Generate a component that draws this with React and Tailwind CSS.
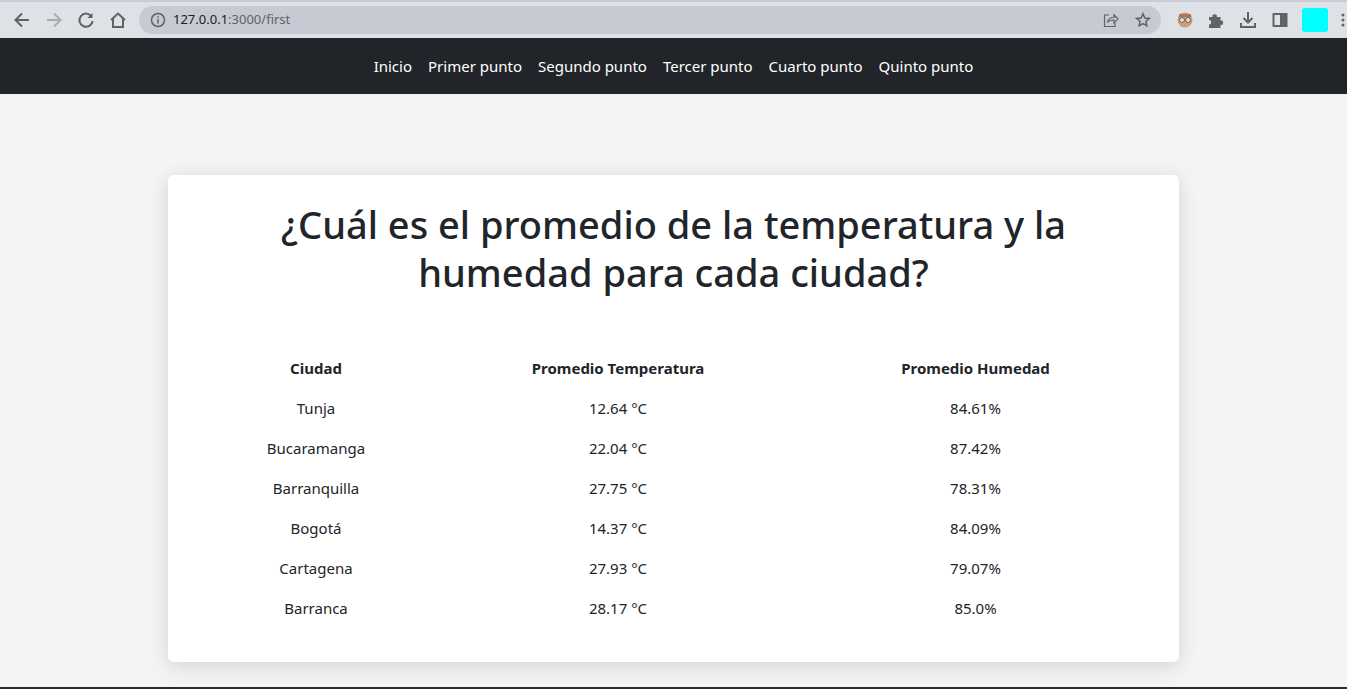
const rows = [
  ['Tunja', '12.64 °C', '84.61%'],
  ['Bucaramanga', '22.04 °C', '87.42%'],
  ['Barranquilla', '27.75 °C', '78.31%'],
  ['Bogotá', '14.37 °C', '84.09%'],
  ['Cartagena', '27.93 °C', '79.07%'],
  ['Barranca', '28.17 °C', '85.0%'],
];

const links = ['Inicio', 'Primer punto', 'Segundo punto', 'Tercer punto', 'Cuarto punto', 'Quinto punto'];

const ChromeBar = () => (
  <div className="h-[38px] bg-[#dee1e6] border-t-2 border-[#c9cbdb] flex items-center text-[#5f6368]">
    <div className="flex items-center w-[139px] pl-[12px] gap-[12px] shrink-0">
      <svg width="20" height="20" viewBox="0 0 20 20" fill="none" stroke="currentColor" strokeWidth="2"><path d="M17 10H4M10 3.5 3.5 10l6.5 6.5" /></svg>
      <svg width="20" height="20" viewBox="0 0 20 20" fill="none" stroke="#a9abb0" strokeWidth="2"><path d="M3 10h13M10 3.5l6.500 6.500-6.500 6.500" /></svg>
      <svg width="20" height="20" viewBox="0 0 20 20" fill="none" stroke="currentColor" strokeWidth="2"><path d="M15.500 6.500A6.600 6.600 0 1 0 16.600 11" /><path d="M16.500 3v5h-5" fill="currentColor" stroke="none" /></svg>
      <svg width="20" height="20" viewBox="0 0 20 20" fill="none" stroke="currentColor" strokeWidth="2"><path d="M3 10l7-6.500 7 6.500M5 8.500V17h10V8.500" /></svg>
    </div>
    <div className="h-[28px] w-[1022px] shrink-0 rounded-full bg-[#c8cad3] flex items-center pl-[11px] pr-[10px]">
      <svg width="16" height="16" viewBox="0 0 16 16" fill="none" stroke="currentColor" strokeWidth="1.500"><circle cx="8" cy="8" r="6.500" /><path d="M8 7v4.500M8 4.200v1.500" /></svg>
      <span className="ml-[7px] text-[13px] text-[#202124] font-['Noto_Sans',sans-serif]">127.0.0.1<span className="text-[#5f6368]">:3000/first</span></span>
      <div className="ml-auto flex items-center gap-[16px]">
        <svg width="16" height="16" viewBox="0 0 16 16" fill="none" stroke="currentColor" strokeWidth="1.200"><path d="M6 3H1.500v11.500H12V11" /><path d="M4.500 10.500c.5-3.500 3-5 6.500-5V2.800l4 4-4 4V8c-2.500 0-5 .5-6.500 2.500z" /></svg>
        <svg width="16" height="16" viewBox="0 0 16 16" fill="none" stroke="currentColor" strokeWidth="1.500"><path d="M8 1.800l1.800 4.200 4.500.4-3.400 3 1 4.400L8 11.500l-3.900 2.300 1-4.400-3.400-3 4.500-.4z" /></svg>
      </div>
    </div>
    <div className="flex items-center pl-[15px] gap-[12px]">
      <svg width="18" height="18" viewBox="0 0 18 18"><circle cx="9" cy="9" r="7.500" fill="#d99a72" /><rect x="3" y="3" width="12" height="3" fill="#b5764f" /><circle cx="6" cy="9" r="2.500" fill="#cfe8ee" stroke="#5f6368" /><circle cx="12" cy="9" r="2.500" fill="#cfe8ee" stroke="#5f6368" /></svg>
      <svg width="20" height="20" viewBox="0 0 20 20" fill="currentColor"><path d="M3 7h3.500a2.200 2.200 0 1 1 4.300 0H14.500v3.500a2.200 2.200 0 1 1 0 4.300V18H3v-3.500a2.200 2.200 0 1 0 0-4.500z" /></svg>
      <svg width="20" height="20" viewBox="0 0 20 20" fill="none" stroke="currentColor" strokeWidth="2"><path d="M10 2v10M5.500 8l4.500 4.500L14.500 8M3 13v4h14v-4" /></svg>
      <svg width="20" height="20" viewBox="0 0 20 20" fill="none" stroke="currentColor" strokeWidth="2"><rect x="3.500" y="4" width="13" height="12" /><rect x="11" y="4" width="5" height="12" fill="currentColor" /></svg>
      <div className="w-[26px] h-[24px] rounded-[3px] bg-[#00ffff]" />
      <svg width="4" height="16" viewBox="0 0 4 16" fill="currentColor" className="ml-[1px]"><circle cx="2" cy="3" r="1.500" /><circle cx="2" cy="8" r="1.500" /><circle cx="2" cy="13" r="1.500" /></svg>
    </div>
  </div>
);

export default function App() {
  return (
    <div className="h-[689px] overflow-hidden bg-[#f4f4f4] flex flex-col font-['Noto_Sans',sans-serif] text-[#212529]">
      <ChromeBar />
      <nav className="h-[56px] bg-[#212529] flex items-center justify-center gap-[16px] text-white text-[15px]">
        {links.map(link => <a key={link}>{link}</a>)}
      </nav>
      <div className="flex-1 flex justify-center pt-[81px]">
        <div className="w-[1011px] h-[487px] bg-white rounded-[6px] shadow-[0_4px_20px_rgba(0,0,0,0.14)] px-[32px] pt-[25px]">
          <h1 className="text-[38px] leading-[48px] font-medium text-center px-[60px]">¿Cuál es el promedio de la temperatura y la humedad para cada ciudad?</h1>
          <table className="w-full mt-[52px] text-center text-[15px] table-fixed">
            <colgroup>
              <col className="w-[232px]" />
              <col className="w-[372px]" />
              <col />
            </colgroup>
            <thead>
              <tr className="h-[40px]">
                <th className="font-bold">Ciudad</th>
                <th className="font-bold">Promedio Temperatura</th>
                <th className="font-bold">Promedio Humedad</th>
              </tr>
            </thead>
            <tbody>
              {rows.map(row => (
                <tr key={row[0]} className="h-[40px]">
                  {row.map(cell => <td key={cell}>{cell}</td>)}
                </tr>
              ))}
            </tbody>
          </table>
        </div>
      </div>
      <div className="h-[2px] bg-[#2b2e33]" />
    </div>
  );
}
